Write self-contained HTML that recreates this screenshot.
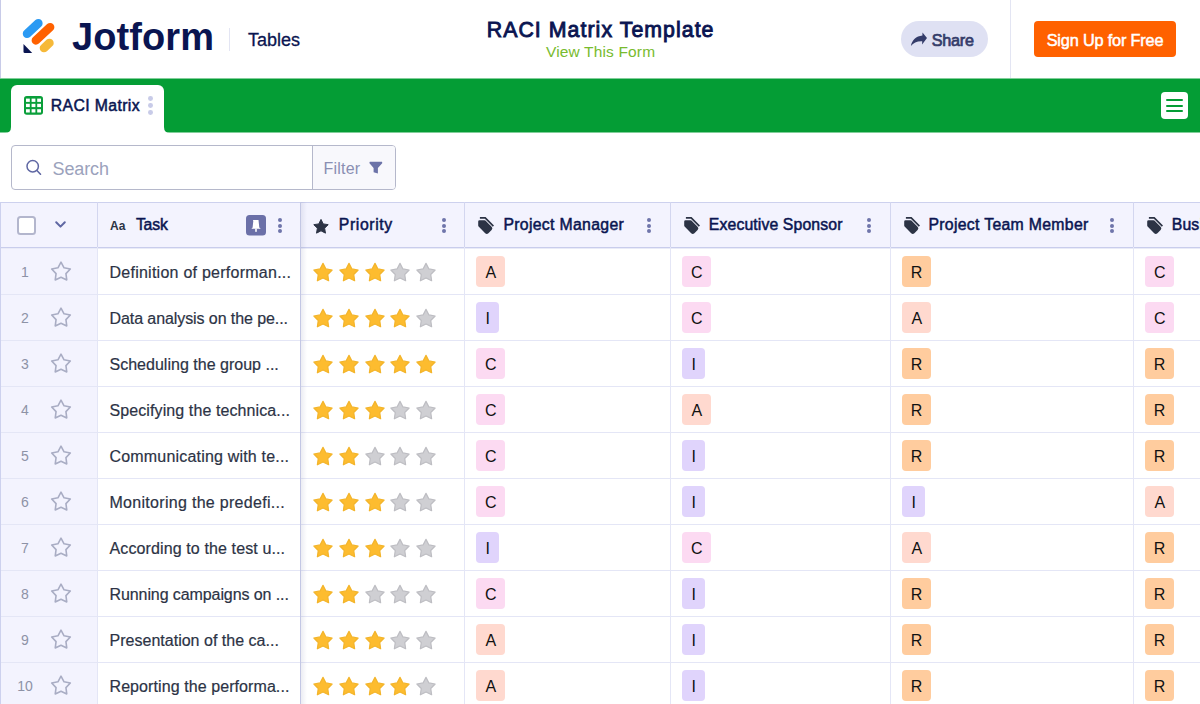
<!DOCTYPE html>
<html><head><meta charset="utf-8">
<style>
*{box-sizing:border-box;margin:0;padding:0}
html,body{width:1200px;height:704px;overflow:hidden;background:#fff;font-family:"Liberation Sans",sans-serif}
.abs{position:absolute}
.t{position:absolute;white-space:nowrap;line-height:1}
.hdrtxt{font-weight:bold;font-size:15.6px;color:#0a1551}
.cell{font-size:16px;color:#2c3345;letter-spacing:0.3px;-webkit-text-stroke:0.2px #2c3345}
.badge{position:absolute;height:31.2px;border-radius:4px;font-size:16px;color:#111;text-align:center;line-height:34px}
</style></head><body>

<div class="abs" style="left:0;top:0;width:1px;height:78px;background:#c8cbe8"></div>
<svg class="abs" style="left:0;top:0" width="70" height="70" viewBox="0 0 70 70"><g transform="translate(32.7,28.5) rotate(-43)"><rect x="-12" y="-4.3" width="24" height="8.6" rx="4.3" fill="#2b9af3"/></g><g transform="translate(43,33.8) rotate(-43)"><rect x="-14" y="-4.3" width="28" height="8.6" rx="4.3" fill="#ff6100"/></g><g transform="translate(46.7,45.5) rotate(-43)"><rect x="-8" y="-4.3" width="16" height="8.6" rx="4.3" fill="#f6b939"/></g><path d="M23.5 44 L32.2 53 L24.8 53 Q23.5 53 23.5 51.7 Z" fill="#0a1551"/></svg>
<div class="t" style="left:72px;top:18px;font-size:38px;font-weight:bold;color:#0a1551;letter-spacing:0.1px">Jotform</div>
<div class="abs" style="left:229px;top:28px;width:1px;height:23px;background:#e3e5f3"></div>
<div class="t" style="left:248px;top:31.4px;font-size:18px;color:#0a1551;letter-spacing:0px;-webkit-text-stroke:0.3px #0a1551">Tables</div>
<div class="t" id="title" style="left:486.74px;top:20px;font-size:21.3px;color:#0a1551;letter-spacing:1.053px;-webkit-text-stroke:0.9px #0a1551;">RACI Matrix Template</div>
<div class="t" style="left:546px;top:44.3px;font-size:15.5px;letter-spacing:0.15px;color:#78bb2e">View This Form</div>
<div class="abs" style="left:901px;top:21px;width:87px;height:35.8px;border-radius:18px;background:#dfe1f3"></div>
<svg class="abs" style="left:910px;top:32px" width="18" height="15" viewBox="0 0 18 15"><path d="M12.5 0.4 L17 6 L12.1 12.4 L12.2 9.2 C7 9 3.5 10.5 0.9 13.9 C2 8.5 6 4.2 12.4 3.6 Z" fill="#343c6a"/></svg>
<div class="t" id="share" style="left:931.66px;top:31.5px;font-size:16.2px;color:#343c6a;letter-spacing:-0.200px;-webkit-text-stroke:0.7px #343c6a;">Share</div>
<div class="abs" style="left:1010px;top:0;width:1px;height:78px;background:#e3e5f3"></div>
<div class="abs" style="left:1034px;top:21px;width:142px;height:36px;border-radius:4px;background:#ff6100"></div>
<div class="t" id="signup" style="left:1046.66px;top:32.3px;font-size:16.3px;color:#fff;letter-spacing:-0.171px;-webkit-text-stroke:0.5px #fff;">Sign Up for Free</div>
<div class="abs" style="left:0;top:79px;width:1200px;height:53px;background:#049d35"></div>
<div class="abs" style="left:0;top:78px;width:1200px;height:1px;background:#049d35;opacity:0.5"></div>
<div class="abs" style="left:0;top:132px;width:1200px;height:1px;background:#049d35;opacity:0.5"></div>
<div class="abs" style="left:11px;top:85px;width:153px;height:48px;background:#fff;border-radius:6px 6px 0 0"></div>
<svg class="abs" style="left:5px;top:126.5px" width="6" height="6" viewBox="0 0 6 6"><path d="M6 0 L6 6 L0 6 Q6 6 6 0Z" fill="#fff"/></svg>
<svg class="abs" style="left:164px;top:126.5px" width="6" height="6" viewBox="0 0 6 6"><path d="M0 0 L0 6 L6 6 Q0 6 0 0Z" fill="#fff"/></svg>
<svg class="abs" style="left:24.2px;top:96px" width="19" height="19" viewBox="0 0 19 19"><rect x="0" y="0" width="19" height="18.8" rx="2.8" fill="#0a9f3a"/><rect x="2" y="2.6" width="3.8" height="3.3" fill="#fff"/><rect x="2" y="7.8" width="3.8" height="3.3" fill="#fff"/><rect x="2" y="13.2" width="3.8" height="3.3" fill="#fff"/><rect x="7.6" y="2.6" width="3.8" height="3.3" fill="#fff"/><rect x="7.6" y="7.8" width="3.8" height="3.3" fill="#fff"/><rect x="7.6" y="13.2" width="3.8" height="3.3" fill="#fff"/><rect x="13.2" y="2.6" width="3.8" height="3.3" fill="#fff"/><rect x="13.2" y="7.8" width="3.8" height="3.3" fill="#fff"/><rect x="13.2" y="13.2" width="3.8" height="3.3" fill="#fff"/></svg>
<div class="t" id="tab" style="left:50.78px;top:97.8px;font-size:15.8px;color:#0a1551;letter-spacing:0.368px;-webkit-text-stroke:0.5px #0a1551;">RACI Matrix</div>
<div class="abs" style="left:148.1px;top:96.1px;width:4.8px;height:4.8px;border-radius:50%;background:#c8cbe8"></div><div class="abs" style="left:148.1px;top:103.1px;width:4.8px;height:4.8px;border-radius:50%;background:#c8cbe8"></div><div class="abs" style="left:148.1px;top:110.1px;width:4.8px;height:4.8px;border-radius:50%;background:#c8cbe8"></div>
<div class="abs" style="left:1161px;top:92px;width:27px;height:27px;border-radius:4px;background:#fff"></div>
<div class="abs" style="left:1166.3px;top:98.9px;width:17px;height:2.1px;border-radius:1px;background:#049d35"></div>
<div class="abs" style="left:1166.3px;top:104.5px;width:17px;height:2.1px;border-radius:1px;background:#049d35"></div>
<div class="abs" style="left:1166.3px;top:110.1px;width:17px;height:2.1px;border-radius:1px;background:#049d35"></div>
<div class="abs" style="left:11px;top:145px;width:384.5px;height:45px;border:1px solid #b5b8cb;border-radius:4px;background:#fff;overflow:hidden"><div class="abs" style="left:299.5px;top:0;width:85px;height:45px;background:#f8f8fc;border-left:1px solid #b5b8cb"></div></div>
<svg class="abs" style="left:25px;top:159px" width="17" height="17" viewBox="0 0 17 17"><circle cx="7.7" cy="7.2" r="5.7" fill="none" stroke="#5f67a3" stroke-width="1.5"/><path d="M11.9 11.5 L15.5 15.2" stroke="#5f67a3" stroke-width="1.6" stroke-linecap="round"/></svg>
<div class="t" style="left:52.5px;top:160px;font-size:18px;letter-spacing:-0.1px;color:#9ba2bc">Search</div>
<div class="t" style="left:323.5px;top:160.5px;font-size:16px;letter-spacing:0.2px;color:#8a8fb3">Filter</div>
<svg class="abs" style="left:369px;top:161px" width="14" height="13" viewBox="0 0 14 13"><path d="M0.9 0.8 L12.9 0.8 Q13.2 0.8 13.2 1.2 L13.2 2.2 L8.9 7 L8.9 12.4 L4.6 11.2 L4.6 7 L0.5 2.2 L0.5 1.2 Q0.5 0.8 0.9 0.8 Z" fill="#6c73a8"/></svg>
<div class="abs" style="left:0;top:202px;width:1200px;height:45px;background:#f3f3fe"></div>
<div class="abs" style="left:0;top:247px;width:97px;height:457px;background:#f3f3fe"></div>
<div class="abs" style="left:0;top:202px;width:1200px;height:1px;background:#cdd1ee"></div>
<div class="abs" style="left:0;top:247px;width:1200px;height:1px;background:#c9cdec"></div>
<div class="abs" style="left:0;top:248px;width:1200px;height:1px;background:#e9ebf8"></div>
<div class="abs" style="left:0;top:294px;width:1200px;height:1px;background:#e4e6f6"></div>
<div class="abs" style="left:0;top:340px;width:1200px;height:1px;background:#e4e6f6"></div>
<div class="abs" style="left:0;top:386px;width:1200px;height:1px;background:#e4e6f6"></div>
<div class="abs" style="left:0;top:432px;width:1200px;height:1px;background:#e4e6f6"></div>
<div class="abs" style="left:0;top:478px;width:1200px;height:1px;background:#e4e6f6"></div>
<div class="abs" style="left:0;top:524px;width:1200px;height:1px;background:#e4e6f6"></div>
<div class="abs" style="left:0;top:570px;width:1200px;height:1px;background:#e4e6f6"></div>
<div class="abs" style="left:0;top:616px;width:1200px;height:1px;background:#e4e6f6"></div>
<div class="abs" style="left:0;top:662px;width:1200px;height:1px;background:#e4e6f6"></div>
<div class="abs" style="left:0;top:202px;width:1px;height:502px;background:#cdd1ee"></div>
<div class="abs" style="left:97px;top:202px;width:1px;height:45px;background:#d3d6ef"></div>
<div class="abs" style="left:97px;top:247px;width:1px;height:457px;background:#e4e6f6"></div>
<div class="abs" style="left:301px;top:202px;width:6px;height:502px;background:linear-gradient(90deg,rgba(120,125,170,0.14),rgba(120,125,170,0))"></div>
<div class="abs" style="left:300px;top:202px;width:1px;height:502px;background:#c3c7e4"></div>
<div class="abs" style="left:464px;top:202px;width:1px;height:45px;background:#d3d6ef"></div>
<div class="abs" style="left:464px;top:247px;width:1px;height:457px;background:#e4e6f6"></div>
<div class="abs" style="left:670px;top:202px;width:1px;height:45px;background:#d3d6ef"></div>
<div class="abs" style="left:670px;top:247px;width:1px;height:457px;background:#e4e6f6"></div>
<div class="abs" style="left:890px;top:202px;width:1px;height:45px;background:#d3d6ef"></div>
<div class="abs" style="left:890px;top:247px;width:1px;height:457px;background:#e4e6f6"></div>
<div class="abs" style="left:1133px;top:202px;width:1px;height:45px;background:#d3d6ef"></div>
<div class="abs" style="left:1133px;top:247px;width:1px;height:457px;background:#e4e6f6"></div>
<div class="abs" style="left:17px;top:215.5px;width:18.8px;height:19px;border:2px solid #b3b6cd;border-radius:3.5px;background:#fff"></div>
<svg class="abs" style="left:54px;top:220px" width="13" height="9" viewBox="0 0 13 9"><path d="M2.2 2.2 L6.5 6.6 L10.8 2.2" fill="none" stroke="#5f67a3" stroke-width="2" stroke-linecap="round" stroke-linejoin="round"/></svg>
<div class="t" style="left:110px;top:220px;font-size:12px;font-weight:bold;color:#2c3345">Aa</div>
<div class="t" id="h_task" style="left:135.88px;top:216.5px;font-size:15.8px;color:#0a1551;letter-spacing:-0.160px;-webkit-text-stroke:0.5px #0a1551;">Task</div>
<svg class="abs" style="left:246.2px;top:215.3px" width="20" height="20.5" viewBox="0 0 20 20.5"><rect width="20" height="20.5" rx="3.5" fill="#6b70a8"/><path d="M6.9 5 L12.5 5 L12.6 6 L13.3 12.4 L14.8 13.7 L5.4 13.7 L6.6 12.4 L7.3 6 Z" fill="#fff"/><rect x="9.2" y="13.6" width="1.6" height="3.2" fill="#fff"/></svg>
<div class="abs" style="left:277.75px;top:218.05px;width:3.9px;height:3.9px;border-radius:50%;background:#6f75ab"></div><div class="abs" style="left:277.75px;top:223.65px;width:3.9px;height:3.9px;border-radius:50%;background:#6f75ab"></div><div class="abs" style="left:277.75px;top:229.25px;width:3.9px;height:3.9px;border-radius:50%;background:#6f75ab"></div>
<svg class="abs" style="left:309.2px;top:214.6px" width="24" height="24" viewBox="0 0 24 24"><path d="M12.00 4.40 L14.23 8.93 L19.23 9.65 L15.61 13.17 L16.47 18.15 L12.00 15.80 L7.53 18.15 L8.39 13.17 L4.77 9.65 L9.77 8.93Z" fill="#2c3345" stroke="#2c3345" stroke-width="1.0" stroke-linejoin="round"/></svg>
<div class="t" id="h_pri" style="left:338.80px;top:216.5px;font-size:15.8px;color:#0a1551;letter-spacing:0.617px;-webkit-text-stroke:0.5px #0a1551;">Priority</div>
<div class="abs" style="left:441.85px;top:218.05px;width:3.9px;height:3.9px;border-radius:50%;background:#6f75ab"></div><div class="abs" style="left:441.85px;top:223.65px;width:3.9px;height:3.9px;border-radius:50%;background:#6f75ab"></div><div class="abs" style="left:441.85px;top:229.25px;width:3.9px;height:3.9px;border-radius:50%;background:#6f75ab"></div>
<svg class="abs" style="left:472px;top:210px" width="30" height="30" viewBox="0 0 30 30"><path d="M6.2 11.6 Q6.2 10.2 7.6 10.2 L12.4 10.2 Q13 10.2 13.4 10.6 L19.6 16.8 Q21.2 18.4 19.6 20 L16.4 23.2 Q14.8 24.8 13.2 23.2 L6.6 16.6 Q6.2 16.2 6.2 15.6 Z" fill="#2c3345"/><path d="M7.9 7.9 L13.2 7.9 L21.4 16.1" fill="none" stroke="#2c3345" stroke-width="1.7"/></svg>
<div class="t" id="h_pm" style="left:503.40px;top:216.5px;font-size:15.8px;color:#0a1551;letter-spacing:0.320px;-webkit-text-stroke:0.5px #0a1551;">Project Manager</div>
<div class="abs" style="left:647.4499999999999px;top:218.05px;width:3.9px;height:3.9px;border-radius:50%;background:#6f75ab"></div><div class="abs" style="left:647.4499999999999px;top:223.65px;width:3.9px;height:3.9px;border-radius:50%;background:#6f75ab"></div><div class="abs" style="left:647.4499999999999px;top:229.25px;width:3.9px;height:3.9px;border-radius:50%;background:#6f75ab"></div>
<svg class="abs" style="left:678px;top:210px" width="30" height="30" viewBox="0 0 30 30"><path d="M6.2 11.6 Q6.2 10.2 7.6 10.2 L12.4 10.2 Q13 10.2 13.4 10.6 L19.6 16.8 Q21.2 18.4 19.6 20 L16.4 23.2 Q14.8 24.8 13.2 23.2 L6.6 16.6 Q6.2 16.2 6.2 15.6 Z" fill="#2c3345"/><path d="M7.9 7.9 L13.2 7.9 L21.4 16.1" fill="none" stroke="#2c3345" stroke-width="1.7"/></svg>
<div class="t" id="h_es" style="left:708.80px;top:216.5px;font-size:15.8px;color:#0a1551;letter-spacing:0.120px;-webkit-text-stroke:0.5px #0a1551;">Executive Sponsor</div>
<div class="abs" style="left:867.4499999999999px;top:218.05px;width:3.9px;height:3.9px;border-radius:50%;background:#6f75ab"></div><div class="abs" style="left:867.4499999999999px;top:223.65px;width:3.9px;height:3.9px;border-radius:50%;background:#6f75ab"></div><div class="abs" style="left:867.4499999999999px;top:229.25px;width:3.9px;height:3.9px;border-radius:50%;background:#6f75ab"></div>
<svg class="abs" style="left:898px;top:210px" width="30" height="30" viewBox="0 0 30 30"><path d="M6.2 11.6 Q6.2 10.2 7.6 10.2 L12.4 10.2 Q13 10.2 13.4 10.6 L19.6 16.8 Q21.2 18.4 19.6 20 L16.4 23.2 Q14.8 24.8 13.2 23.2 L6.6 16.6 Q6.2 16.2 6.2 15.6 Z" fill="#2c3345"/><path d="M7.9 7.9 L13.2 7.9 L21.4 16.1" fill="none" stroke="#2c3345" stroke-width="1.7"/></svg>
<div class="t" id="h_ptm" style="left:928.44px;top:216.5px;font-size:15.8px;color:#0a1551;letter-spacing:0.311px;-webkit-text-stroke:0.5px #0a1551;">Project Team Member</div>
<div class="abs" style="left:1110.05px;top:218.05px;width:3.9px;height:3.9px;border-radius:50%;background:#6f75ab"></div><div class="abs" style="left:1110.05px;top:223.65px;width:3.9px;height:3.9px;border-radius:50%;background:#6f75ab"></div><div class="abs" style="left:1110.05px;top:229.25px;width:3.9px;height:3.9px;border-radius:50%;background:#6f75ab"></div>
<svg class="abs" style="left:1141px;top:210px" width="30" height="30" viewBox="0 0 30 30"><path d="M6.2 11.6 Q6.2 10.2 7.6 10.2 L12.4 10.2 Q13 10.2 13.4 10.6 L19.6 16.8 Q21.2 18.4 19.6 20 L16.4 23.2 Q14.8 24.8 13.2 23.2 L6.6 16.6 Q6.2 16.2 6.2 15.6 Z" fill="#2c3345"/><path d="M7.9 7.9 L13.2 7.9 L21.4 16.1" fill="none" stroke="#2c3345" stroke-width="1.7"/></svg>
<div class="t" id="h_ba" style="left:1171.80px;top:216.5px;font-size:15.8px;color:#0a1551;letter-spacing:0.120px;-webkit-text-stroke:0.5px #0a1551;">Business Analyst</div>
<div class="t" style="left:0;top:265px;width:50px;text-align:center;font-size:14px;color:#8d92a6">1</div>
<svg class="abs" style="left:48.6px;top:260.0px" width="24" height="24" viewBox="0 0 24 24"><path d="M12.00 2.20 L15.05 7.80 L21.32 8.97 L16.94 13.61 L17.76 19.93 L12.00 17.19 L6.24 19.93 L7.06 13.61 L2.68 8.97 L8.95 7.80Z" fill="none" stroke="#a9adc4" stroke-width="1.6" stroke-linejoin="round"/></svg>
<div class="t cell" style="left:109.5px;top:264.7px;letter-spacing:0.252px">Definition of performan...</div>
<svg class="abs" style="left:311.0px;top:260.8px" width="24" height="24" viewBox="0 0 24 24"><path d="M12.00 2.40 L14.93 7.96 L21.13 9.03 L16.75 13.54 L17.64 19.77 L12.00 16.99 L6.36 19.77 L7.25 13.54 L2.87 9.03 L9.07 7.96Z" fill="#fdbc2f" stroke="#f3b42a" stroke-width="1.2" stroke-linejoin="round"/></svg>
<svg class="abs" style="left:336.8px;top:260.8px" width="24" height="24" viewBox="0 0 24 24"><path d="M12.00 2.40 L14.93 7.96 L21.13 9.03 L16.75 13.54 L17.64 19.77 L12.00 16.99 L6.36 19.77 L7.25 13.54 L2.87 9.03 L9.07 7.96Z" fill="#fdbc2f" stroke="#f3b42a" stroke-width="1.2" stroke-linejoin="round"/></svg>
<svg class="abs" style="left:362.6px;top:260.8px" width="24" height="24" viewBox="0 0 24 24"><path d="M12.00 2.40 L14.93 7.96 L21.13 9.03 L16.75 13.54 L17.64 19.77 L12.00 16.99 L6.36 19.77 L7.25 13.54 L2.87 9.03 L9.07 7.96Z" fill="#fdbc2f" stroke="#f3b42a" stroke-width="1.2" stroke-linejoin="round"/></svg>
<svg class="abs" style="left:388.4px;top:260.8px" width="24" height="24" viewBox="0 0 24 24"><path d="M12.00 2.40 L14.93 7.96 L21.13 9.03 L16.75 13.54 L17.64 19.77 L12.00 16.99 L6.36 19.77 L7.25 13.54 L2.87 9.03 L9.07 7.96Z" fill="#cfcfd3" stroke="#bdbdc2" stroke-width="1.2" stroke-linejoin="round"/></svg>
<svg class="abs" style="left:414.2px;top:260.8px" width="24" height="24" viewBox="0 0 24 24"><path d="M12.00 2.40 L14.93 7.96 L21.13 9.03 L16.75 13.54 L17.64 19.77 L12.00 16.99 L6.36 19.77 L7.25 13.54 L2.87 9.03 L9.07 7.96Z" fill="#cfcfd3" stroke="#bdbdc2" stroke-width="1.2" stroke-linejoin="round"/></svg>
<div class="badge" style="left:476.4px;top:256px;width:29px;background:#ffd9cf">A</div>
<div class="badge" style="left:682.4px;top:256px;width:29px;background:#fcdaf2">C</div>
<div class="badge" style="left:902.4px;top:256px;width:28.2px;background:#ffcc9e">R</div>
<div class="badge" style="left:1145.4px;top:256px;width:29px;background:#fcdaf2">C</div>
<div class="t" style="left:0;top:311px;width:50px;text-align:center;font-size:14px;color:#8d92a6">2</div>
<svg class="abs" style="left:48.6px;top:306.0px" width="24" height="24" viewBox="0 0 24 24"><path d="M12.00 2.20 L15.05 7.80 L21.32 8.97 L16.94 13.61 L17.76 19.93 L12.00 17.19 L6.24 19.93 L7.06 13.61 L2.68 8.97 L8.95 7.80Z" fill="none" stroke="#a9adc4" stroke-width="1.6" stroke-linejoin="round"/></svg>
<div class="t cell" style="left:109.5px;top:310.7px;letter-spacing:-0.084px">Data analysis on the pe...</div>
<svg class="abs" style="left:311.0px;top:306.8px" width="24" height="24" viewBox="0 0 24 24"><path d="M12.00 2.40 L14.93 7.96 L21.13 9.03 L16.75 13.54 L17.64 19.77 L12.00 16.99 L6.36 19.77 L7.25 13.54 L2.87 9.03 L9.07 7.96Z" fill="#fdbc2f" stroke="#f3b42a" stroke-width="1.2" stroke-linejoin="round"/></svg>
<svg class="abs" style="left:336.8px;top:306.8px" width="24" height="24" viewBox="0 0 24 24"><path d="M12.00 2.40 L14.93 7.96 L21.13 9.03 L16.75 13.54 L17.64 19.77 L12.00 16.99 L6.36 19.77 L7.25 13.54 L2.87 9.03 L9.07 7.96Z" fill="#fdbc2f" stroke="#f3b42a" stroke-width="1.2" stroke-linejoin="round"/></svg>
<svg class="abs" style="left:362.6px;top:306.8px" width="24" height="24" viewBox="0 0 24 24"><path d="M12.00 2.40 L14.93 7.96 L21.13 9.03 L16.75 13.54 L17.64 19.77 L12.00 16.99 L6.36 19.77 L7.25 13.54 L2.87 9.03 L9.07 7.96Z" fill="#fdbc2f" stroke="#f3b42a" stroke-width="1.2" stroke-linejoin="round"/></svg>
<svg class="abs" style="left:388.4px;top:306.8px" width="24" height="24" viewBox="0 0 24 24"><path d="M12.00 2.40 L14.93 7.96 L21.13 9.03 L16.75 13.54 L17.64 19.77 L12.00 16.99 L6.36 19.77 L7.25 13.54 L2.87 9.03 L9.07 7.96Z" fill="#fdbc2f" stroke="#f3b42a" stroke-width="1.2" stroke-linejoin="round"/></svg>
<svg class="abs" style="left:414.2px;top:306.8px" width="24" height="24" viewBox="0 0 24 24"><path d="M12.00 2.40 L14.93 7.96 L21.13 9.03 L16.75 13.54 L17.64 19.77 L12.00 16.99 L6.36 19.77 L7.25 13.54 L2.87 9.03 L9.07 7.96Z" fill="#cfcfd3" stroke="#bdbdc2" stroke-width="1.2" stroke-linejoin="round"/></svg>
<div class="badge" style="left:476.4px;top:302px;width:22.6px;background:#e0d4fc">I</div>
<div class="badge" style="left:682.4px;top:302px;width:29px;background:#fcdaf2">C</div>
<div class="badge" style="left:902.4px;top:302px;width:29px;background:#ffd9cf">A</div>
<div class="badge" style="left:1145.4px;top:302px;width:29px;background:#fcdaf2">C</div>
<div class="t" style="left:0;top:357px;width:50px;text-align:center;font-size:14px;color:#8d92a6">3</div>
<svg class="abs" style="left:48.6px;top:352.0px" width="24" height="24" viewBox="0 0 24 24"><path d="M12.00 2.20 L15.05 7.80 L21.32 8.97 L16.94 13.61 L17.76 19.93 L12.00 17.19 L6.24 19.93 L7.06 13.61 L2.68 8.97 L8.95 7.80Z" fill="none" stroke="#a9adc4" stroke-width="1.6" stroke-linejoin="round"/></svg>
<div class="t cell" style="left:109.5px;top:356.7px;letter-spacing:0.013px">Scheduling the group ...</div>
<svg class="abs" style="left:311.0px;top:352.8px" width="24" height="24" viewBox="0 0 24 24"><path d="M12.00 2.40 L14.93 7.96 L21.13 9.03 L16.75 13.54 L17.64 19.77 L12.00 16.99 L6.36 19.77 L7.25 13.54 L2.87 9.03 L9.07 7.96Z" fill="#fdbc2f" stroke="#f3b42a" stroke-width="1.2" stroke-linejoin="round"/></svg>
<svg class="abs" style="left:336.8px;top:352.8px" width="24" height="24" viewBox="0 0 24 24"><path d="M12.00 2.40 L14.93 7.96 L21.13 9.03 L16.75 13.54 L17.64 19.77 L12.00 16.99 L6.36 19.77 L7.25 13.54 L2.87 9.03 L9.07 7.96Z" fill="#fdbc2f" stroke="#f3b42a" stroke-width="1.2" stroke-linejoin="round"/></svg>
<svg class="abs" style="left:362.6px;top:352.8px" width="24" height="24" viewBox="0 0 24 24"><path d="M12.00 2.40 L14.93 7.96 L21.13 9.03 L16.75 13.54 L17.64 19.77 L12.00 16.99 L6.36 19.77 L7.25 13.54 L2.87 9.03 L9.07 7.96Z" fill="#fdbc2f" stroke="#f3b42a" stroke-width="1.2" stroke-linejoin="round"/></svg>
<svg class="abs" style="left:388.4px;top:352.8px" width="24" height="24" viewBox="0 0 24 24"><path d="M12.00 2.40 L14.93 7.96 L21.13 9.03 L16.75 13.54 L17.64 19.77 L12.00 16.99 L6.36 19.77 L7.25 13.54 L2.87 9.03 L9.07 7.96Z" fill="#fdbc2f" stroke="#f3b42a" stroke-width="1.2" stroke-linejoin="round"/></svg>
<svg class="abs" style="left:414.2px;top:352.8px" width="24" height="24" viewBox="0 0 24 24"><path d="M12.00 2.40 L14.93 7.96 L21.13 9.03 L16.75 13.54 L17.64 19.77 L12.00 16.99 L6.36 19.77 L7.25 13.54 L2.87 9.03 L9.07 7.96Z" fill="#fdbc2f" stroke="#f3b42a" stroke-width="1.2" stroke-linejoin="round"/></svg>
<div class="badge" style="left:476.4px;top:348px;width:29px;background:#fcdaf2">C</div>
<div class="badge" style="left:682.4px;top:348px;width:22.6px;background:#e0d4fc">I</div>
<div class="badge" style="left:902.4px;top:348px;width:28.2px;background:#ffcc9e">R</div>
<div class="badge" style="left:1145.4px;top:348px;width:28.2px;background:#ffcc9e">R</div>
<div class="t" style="left:0;top:403px;width:50px;text-align:center;font-size:14px;color:#8d92a6">4</div>
<svg class="abs" style="left:48.6px;top:398.0px" width="24" height="24" viewBox="0 0 24 24"><path d="M12.00 2.20 L15.05 7.80 L21.32 8.97 L16.94 13.61 L17.76 19.93 L12.00 17.19 L6.24 19.93 L7.06 13.61 L2.68 8.97 L8.95 7.80Z" fill="none" stroke="#a9adc4" stroke-width="1.6" stroke-linejoin="round"/></svg>
<div class="t cell" style="left:109.5px;top:402.7px;letter-spacing:0.100px">Specifying the technica...</div>
<svg class="abs" style="left:311.0px;top:398.8px" width="24" height="24" viewBox="0 0 24 24"><path d="M12.00 2.40 L14.93 7.96 L21.13 9.03 L16.75 13.54 L17.64 19.77 L12.00 16.99 L6.36 19.77 L7.25 13.54 L2.87 9.03 L9.07 7.96Z" fill="#fdbc2f" stroke="#f3b42a" stroke-width="1.2" stroke-linejoin="round"/></svg>
<svg class="abs" style="left:336.8px;top:398.8px" width="24" height="24" viewBox="0 0 24 24"><path d="M12.00 2.40 L14.93 7.96 L21.13 9.03 L16.75 13.54 L17.64 19.77 L12.00 16.99 L6.36 19.77 L7.25 13.54 L2.87 9.03 L9.07 7.96Z" fill="#fdbc2f" stroke="#f3b42a" stroke-width="1.2" stroke-linejoin="round"/></svg>
<svg class="abs" style="left:362.6px;top:398.8px" width="24" height="24" viewBox="0 0 24 24"><path d="M12.00 2.40 L14.93 7.96 L21.13 9.03 L16.75 13.54 L17.64 19.77 L12.00 16.99 L6.36 19.77 L7.25 13.54 L2.87 9.03 L9.07 7.96Z" fill="#fdbc2f" stroke="#f3b42a" stroke-width="1.2" stroke-linejoin="round"/></svg>
<svg class="abs" style="left:388.4px;top:398.8px" width="24" height="24" viewBox="0 0 24 24"><path d="M12.00 2.40 L14.93 7.96 L21.13 9.03 L16.75 13.54 L17.64 19.77 L12.00 16.99 L6.36 19.77 L7.25 13.54 L2.87 9.03 L9.07 7.96Z" fill="#cfcfd3" stroke="#bdbdc2" stroke-width="1.2" stroke-linejoin="round"/></svg>
<svg class="abs" style="left:414.2px;top:398.8px" width="24" height="24" viewBox="0 0 24 24"><path d="M12.00 2.40 L14.93 7.96 L21.13 9.03 L16.75 13.54 L17.64 19.77 L12.00 16.99 L6.36 19.77 L7.25 13.54 L2.87 9.03 L9.07 7.96Z" fill="#cfcfd3" stroke="#bdbdc2" stroke-width="1.2" stroke-linejoin="round"/></svg>
<div class="badge" style="left:476.4px;top:394px;width:29px;background:#fcdaf2">C</div>
<div class="badge" style="left:682.4px;top:394px;width:29px;background:#ffd9cf">A</div>
<div class="badge" style="left:902.4px;top:394px;width:28.2px;background:#ffcc9e">R</div>
<div class="badge" style="left:1145.4px;top:394px;width:28.2px;background:#ffcc9e">R</div>
<div class="t" style="left:0;top:449px;width:50px;text-align:center;font-size:14px;color:#8d92a6">5</div>
<svg class="abs" style="left:48.6px;top:444.0px" width="24" height="24" viewBox="0 0 24 24"><path d="M12.00 2.20 L15.05 7.80 L21.32 8.97 L16.94 13.61 L17.76 19.93 L12.00 17.19 L6.24 19.93 L7.06 13.61 L2.68 8.97 L8.95 7.80Z" fill="none" stroke="#a9adc4" stroke-width="1.6" stroke-linejoin="round"/></svg>
<div class="t cell" style="left:109.5px;top:448.7px;letter-spacing:0.187px">Communicating with te...</div>
<svg class="abs" style="left:311.0px;top:444.8px" width="24" height="24" viewBox="0 0 24 24"><path d="M12.00 2.40 L14.93 7.96 L21.13 9.03 L16.75 13.54 L17.64 19.77 L12.00 16.99 L6.36 19.77 L7.25 13.54 L2.87 9.03 L9.07 7.96Z" fill="#fdbc2f" stroke="#f3b42a" stroke-width="1.2" stroke-linejoin="round"/></svg>
<svg class="abs" style="left:336.8px;top:444.8px" width="24" height="24" viewBox="0 0 24 24"><path d="M12.00 2.40 L14.93 7.96 L21.13 9.03 L16.75 13.54 L17.64 19.77 L12.00 16.99 L6.36 19.77 L7.25 13.54 L2.87 9.03 L9.07 7.96Z" fill="#fdbc2f" stroke="#f3b42a" stroke-width="1.2" stroke-linejoin="round"/></svg>
<svg class="abs" style="left:362.6px;top:444.8px" width="24" height="24" viewBox="0 0 24 24"><path d="M12.00 2.40 L14.93 7.96 L21.13 9.03 L16.75 13.54 L17.64 19.77 L12.00 16.99 L6.36 19.77 L7.25 13.54 L2.87 9.03 L9.07 7.96Z" fill="#cfcfd3" stroke="#bdbdc2" stroke-width="1.2" stroke-linejoin="round"/></svg>
<svg class="abs" style="left:388.4px;top:444.8px" width="24" height="24" viewBox="0 0 24 24"><path d="M12.00 2.40 L14.93 7.96 L21.13 9.03 L16.75 13.54 L17.64 19.77 L12.00 16.99 L6.36 19.77 L7.25 13.54 L2.87 9.03 L9.07 7.96Z" fill="#cfcfd3" stroke="#bdbdc2" stroke-width="1.2" stroke-linejoin="round"/></svg>
<svg class="abs" style="left:414.2px;top:444.8px" width="24" height="24" viewBox="0 0 24 24"><path d="M12.00 2.40 L14.93 7.96 L21.13 9.03 L16.75 13.54 L17.64 19.77 L12.00 16.99 L6.36 19.77 L7.25 13.54 L2.87 9.03 L9.07 7.96Z" fill="#cfcfd3" stroke="#bdbdc2" stroke-width="1.2" stroke-linejoin="round"/></svg>
<div class="badge" style="left:476.4px;top:440px;width:29px;background:#fcdaf2">C</div>
<div class="badge" style="left:682.4px;top:440px;width:22.6px;background:#e0d4fc">I</div>
<div class="badge" style="left:902.4px;top:440px;width:28.2px;background:#ffcc9e">R</div>
<div class="badge" style="left:1145.4px;top:440px;width:28.2px;background:#ffcc9e">R</div>
<div class="t" style="left:0;top:495px;width:50px;text-align:center;font-size:14px;color:#8d92a6">6</div>
<svg class="abs" style="left:48.6px;top:490.0px" width="24" height="24" viewBox="0 0 24 24"><path d="M12.00 2.20 L15.05 7.80 L21.32 8.97 L16.94 13.61 L17.76 19.93 L12.00 17.19 L6.24 19.93 L7.06 13.61 L2.68 8.97 L8.95 7.80Z" fill="none" stroke="#a9adc4" stroke-width="1.6" stroke-linejoin="round"/></svg>
<div class="t cell" style="left:109.5px;top:494.7px;letter-spacing:0.296px">Monitoring the predefi...</div>
<svg class="abs" style="left:311.0px;top:490.8px" width="24" height="24" viewBox="0 0 24 24"><path d="M12.00 2.40 L14.93 7.96 L21.13 9.03 L16.75 13.54 L17.64 19.77 L12.00 16.99 L6.36 19.77 L7.25 13.54 L2.87 9.03 L9.07 7.96Z" fill="#fdbc2f" stroke="#f3b42a" stroke-width="1.2" stroke-linejoin="round"/></svg>
<svg class="abs" style="left:336.8px;top:490.8px" width="24" height="24" viewBox="0 0 24 24"><path d="M12.00 2.40 L14.93 7.96 L21.13 9.03 L16.75 13.54 L17.64 19.77 L12.00 16.99 L6.36 19.77 L7.25 13.54 L2.87 9.03 L9.07 7.96Z" fill="#fdbc2f" stroke="#f3b42a" stroke-width="1.2" stroke-linejoin="round"/></svg>
<svg class="abs" style="left:362.6px;top:490.8px" width="24" height="24" viewBox="0 0 24 24"><path d="M12.00 2.40 L14.93 7.96 L21.13 9.03 L16.75 13.54 L17.64 19.77 L12.00 16.99 L6.36 19.77 L7.25 13.54 L2.87 9.03 L9.07 7.96Z" fill="#fdbc2f" stroke="#f3b42a" stroke-width="1.2" stroke-linejoin="round"/></svg>
<svg class="abs" style="left:388.4px;top:490.8px" width="24" height="24" viewBox="0 0 24 24"><path d="M12.00 2.40 L14.93 7.96 L21.13 9.03 L16.75 13.54 L17.64 19.77 L12.00 16.99 L6.36 19.77 L7.25 13.54 L2.87 9.03 L9.07 7.96Z" fill="#cfcfd3" stroke="#bdbdc2" stroke-width="1.2" stroke-linejoin="round"/></svg>
<svg class="abs" style="left:414.2px;top:490.8px" width="24" height="24" viewBox="0 0 24 24"><path d="M12.00 2.40 L14.93 7.96 L21.13 9.03 L16.75 13.54 L17.64 19.77 L12.00 16.99 L6.36 19.77 L7.25 13.54 L2.87 9.03 L9.07 7.96Z" fill="#cfcfd3" stroke="#bdbdc2" stroke-width="1.2" stroke-linejoin="round"/></svg>
<div class="badge" style="left:476.4px;top:486px;width:29px;background:#fcdaf2">C</div>
<div class="badge" style="left:682.4px;top:486px;width:22.6px;background:#e0d4fc">I</div>
<div class="badge" style="left:902.4px;top:486px;width:22.6px;background:#e0d4fc">I</div>
<div class="badge" style="left:1145.4px;top:486px;width:29px;background:#ffd9cf">A</div>
<div class="t" style="left:0;top:541px;width:50px;text-align:center;font-size:14px;color:#8d92a6">7</div>
<svg class="abs" style="left:48.6px;top:536.0px" width="24" height="24" viewBox="0 0 24 24"><path d="M12.00 2.20 L15.05 7.80 L21.32 8.97 L16.94 13.61 L17.76 19.93 L12.00 17.19 L6.24 19.93 L7.06 13.61 L2.68 8.97 L8.95 7.80Z" fill="none" stroke="#a9adc4" stroke-width="1.6" stroke-linejoin="round"/></svg>
<div class="t cell" style="left:109.5px;top:540.7px;letter-spacing:0.120px">According to the test u...</div>
<svg class="abs" style="left:311.0px;top:536.8px" width="24" height="24" viewBox="0 0 24 24"><path d="M12.00 2.40 L14.93 7.96 L21.13 9.03 L16.75 13.54 L17.64 19.77 L12.00 16.99 L6.36 19.77 L7.25 13.54 L2.87 9.03 L9.07 7.96Z" fill="#fdbc2f" stroke="#f3b42a" stroke-width="1.2" stroke-linejoin="round"/></svg>
<svg class="abs" style="left:336.8px;top:536.8px" width="24" height="24" viewBox="0 0 24 24"><path d="M12.00 2.40 L14.93 7.96 L21.13 9.03 L16.75 13.54 L17.64 19.77 L12.00 16.99 L6.36 19.77 L7.25 13.54 L2.87 9.03 L9.07 7.96Z" fill="#fdbc2f" stroke="#f3b42a" stroke-width="1.2" stroke-linejoin="round"/></svg>
<svg class="abs" style="left:362.6px;top:536.8px" width="24" height="24" viewBox="0 0 24 24"><path d="M12.00 2.40 L14.93 7.96 L21.13 9.03 L16.75 13.54 L17.64 19.77 L12.00 16.99 L6.36 19.77 L7.25 13.54 L2.87 9.03 L9.07 7.96Z" fill="#fdbc2f" stroke="#f3b42a" stroke-width="1.2" stroke-linejoin="round"/></svg>
<svg class="abs" style="left:388.4px;top:536.8px" width="24" height="24" viewBox="0 0 24 24"><path d="M12.00 2.40 L14.93 7.96 L21.13 9.03 L16.75 13.54 L17.64 19.77 L12.00 16.99 L6.36 19.77 L7.25 13.54 L2.87 9.03 L9.07 7.96Z" fill="#cfcfd3" stroke="#bdbdc2" stroke-width="1.2" stroke-linejoin="round"/></svg>
<svg class="abs" style="left:414.2px;top:536.8px" width="24" height="24" viewBox="0 0 24 24"><path d="M12.00 2.40 L14.93 7.96 L21.13 9.03 L16.75 13.54 L17.64 19.77 L12.00 16.99 L6.36 19.77 L7.25 13.54 L2.87 9.03 L9.07 7.96Z" fill="#cfcfd3" stroke="#bdbdc2" stroke-width="1.2" stroke-linejoin="round"/></svg>
<div class="badge" style="left:476.4px;top:532px;width:22.6px;background:#e0d4fc">I</div>
<div class="badge" style="left:682.4px;top:532px;width:29px;background:#fcdaf2">C</div>
<div class="badge" style="left:902.4px;top:532px;width:29px;background:#ffd9cf">A</div>
<div class="badge" style="left:1145.4px;top:532px;width:28.2px;background:#ffcc9e">R</div>
<div class="t" style="left:0;top:587px;width:50px;text-align:center;font-size:14px;color:#8d92a6">8</div>
<svg class="abs" style="left:48.6px;top:582.0px" width="24" height="24" viewBox="0 0 24 24"><path d="M12.00 2.20 L15.05 7.80 L21.32 8.97 L16.94 13.61 L17.76 19.93 L12.00 17.19 L6.24 19.93 L7.06 13.61 L2.68 8.97 L8.95 7.80Z" fill="none" stroke="#a9adc4" stroke-width="1.6" stroke-linejoin="round"/></svg>
<div class="t cell" style="left:109.5px;top:586.7px;letter-spacing:-0.091px">Running campaigns on ...</div>
<svg class="abs" style="left:311.0px;top:582.8px" width="24" height="24" viewBox="0 0 24 24"><path d="M12.00 2.40 L14.93 7.96 L21.13 9.03 L16.75 13.54 L17.64 19.77 L12.00 16.99 L6.36 19.77 L7.25 13.54 L2.87 9.03 L9.07 7.96Z" fill="#fdbc2f" stroke="#f3b42a" stroke-width="1.2" stroke-linejoin="round"/></svg>
<svg class="abs" style="left:336.8px;top:582.8px" width="24" height="24" viewBox="0 0 24 24"><path d="M12.00 2.40 L14.93 7.96 L21.13 9.03 L16.75 13.54 L17.64 19.77 L12.00 16.99 L6.36 19.77 L7.25 13.54 L2.87 9.03 L9.07 7.96Z" fill="#fdbc2f" stroke="#f3b42a" stroke-width="1.2" stroke-linejoin="round"/></svg>
<svg class="abs" style="left:362.6px;top:582.8px" width="24" height="24" viewBox="0 0 24 24"><path d="M12.00 2.40 L14.93 7.96 L21.13 9.03 L16.75 13.54 L17.64 19.77 L12.00 16.99 L6.36 19.77 L7.25 13.54 L2.87 9.03 L9.07 7.96Z" fill="#cfcfd3" stroke="#bdbdc2" stroke-width="1.2" stroke-linejoin="round"/></svg>
<svg class="abs" style="left:388.4px;top:582.8px" width="24" height="24" viewBox="0 0 24 24"><path d="M12.00 2.40 L14.93 7.96 L21.13 9.03 L16.75 13.54 L17.64 19.77 L12.00 16.99 L6.36 19.77 L7.25 13.54 L2.87 9.03 L9.07 7.96Z" fill="#cfcfd3" stroke="#bdbdc2" stroke-width="1.2" stroke-linejoin="round"/></svg>
<svg class="abs" style="left:414.2px;top:582.8px" width="24" height="24" viewBox="0 0 24 24"><path d="M12.00 2.40 L14.93 7.96 L21.13 9.03 L16.75 13.54 L17.64 19.77 L12.00 16.99 L6.36 19.77 L7.25 13.54 L2.87 9.03 L9.07 7.96Z" fill="#cfcfd3" stroke="#bdbdc2" stroke-width="1.2" stroke-linejoin="round"/></svg>
<div class="badge" style="left:476.4px;top:578px;width:29px;background:#fcdaf2">C</div>
<div class="badge" style="left:682.4px;top:578px;width:22.6px;background:#e0d4fc">I</div>
<div class="badge" style="left:902.4px;top:578px;width:28.2px;background:#ffcc9e">R</div>
<div class="badge" style="left:1145.4px;top:578px;width:28.2px;background:#ffcc9e">R</div>
<div class="t" style="left:0;top:633px;width:50px;text-align:center;font-size:14px;color:#8d92a6">9</div>
<svg class="abs" style="left:48.6px;top:628.0px" width="24" height="24" viewBox="0 0 24 24"><path d="M12.00 2.20 L15.05 7.80 L21.32 8.97 L16.94 13.61 L17.76 19.93 L12.00 17.19 L6.24 19.93 L7.06 13.61 L2.68 8.97 L8.95 7.80Z" fill="none" stroke="#a9adc4" stroke-width="1.6" stroke-linejoin="round"/></svg>
<div class="t cell" style="left:109.5px;top:632.7px;letter-spacing:0.017px">Presentation of the ca...</div>
<svg class="abs" style="left:311.0px;top:628.8px" width="24" height="24" viewBox="0 0 24 24"><path d="M12.00 2.40 L14.93 7.96 L21.13 9.03 L16.75 13.54 L17.64 19.77 L12.00 16.99 L6.36 19.77 L7.25 13.54 L2.87 9.03 L9.07 7.96Z" fill="#fdbc2f" stroke="#f3b42a" stroke-width="1.2" stroke-linejoin="round"/></svg>
<svg class="abs" style="left:336.8px;top:628.8px" width="24" height="24" viewBox="0 0 24 24"><path d="M12.00 2.40 L14.93 7.96 L21.13 9.03 L16.75 13.54 L17.64 19.77 L12.00 16.99 L6.36 19.77 L7.25 13.54 L2.87 9.03 L9.07 7.96Z" fill="#fdbc2f" stroke="#f3b42a" stroke-width="1.2" stroke-linejoin="round"/></svg>
<svg class="abs" style="left:362.6px;top:628.8px" width="24" height="24" viewBox="0 0 24 24"><path d="M12.00 2.40 L14.93 7.96 L21.13 9.03 L16.75 13.54 L17.64 19.77 L12.00 16.99 L6.36 19.77 L7.25 13.54 L2.87 9.03 L9.07 7.96Z" fill="#fdbc2f" stroke="#f3b42a" stroke-width="1.2" stroke-linejoin="round"/></svg>
<svg class="abs" style="left:388.4px;top:628.8px" width="24" height="24" viewBox="0 0 24 24"><path d="M12.00 2.40 L14.93 7.96 L21.13 9.03 L16.75 13.54 L17.64 19.77 L12.00 16.99 L6.36 19.77 L7.25 13.54 L2.87 9.03 L9.07 7.96Z" fill="#cfcfd3" stroke="#bdbdc2" stroke-width="1.2" stroke-linejoin="round"/></svg>
<svg class="abs" style="left:414.2px;top:628.8px" width="24" height="24" viewBox="0 0 24 24"><path d="M12.00 2.40 L14.93 7.96 L21.13 9.03 L16.75 13.54 L17.64 19.77 L12.00 16.99 L6.36 19.77 L7.25 13.54 L2.87 9.03 L9.07 7.96Z" fill="#cfcfd3" stroke="#bdbdc2" stroke-width="1.2" stroke-linejoin="round"/></svg>
<div class="badge" style="left:476.4px;top:624px;width:29px;background:#ffd9cf">A</div>
<div class="badge" style="left:682.4px;top:624px;width:22.6px;background:#e0d4fc">I</div>
<div class="badge" style="left:902.4px;top:624px;width:28.2px;background:#ffcc9e">R</div>
<div class="badge" style="left:1145.4px;top:624px;width:28.2px;background:#ffcc9e">R</div>
<div class="t" style="left:0;top:679px;width:50px;text-align:center;font-size:14px;color:#8d92a6">10</div>
<svg class="abs" style="left:48.6px;top:674.0px" width="24" height="24" viewBox="0 0 24 24"><path d="M12.00 2.20 L15.05 7.80 L21.32 8.97 L16.94 13.61 L17.76 19.93 L12.00 17.19 L6.24 19.93 L7.06 13.61 L2.68 8.97 L8.95 7.80Z" fill="none" stroke="#a9adc4" stroke-width="1.6" stroke-linejoin="round"/></svg>
<div class="t cell" style="left:109.5px;top:678.7px;letter-spacing:0.083px">Reporting the performa...</div>
<svg class="abs" style="left:311.0px;top:674.8px" width="24" height="24" viewBox="0 0 24 24"><path d="M12.00 2.40 L14.93 7.96 L21.13 9.03 L16.75 13.54 L17.64 19.77 L12.00 16.99 L6.36 19.77 L7.25 13.54 L2.87 9.03 L9.07 7.96Z" fill="#fdbc2f" stroke="#f3b42a" stroke-width="1.2" stroke-linejoin="round"/></svg>
<svg class="abs" style="left:336.8px;top:674.8px" width="24" height="24" viewBox="0 0 24 24"><path d="M12.00 2.40 L14.93 7.96 L21.13 9.03 L16.75 13.54 L17.64 19.77 L12.00 16.99 L6.36 19.77 L7.25 13.54 L2.87 9.03 L9.07 7.96Z" fill="#fdbc2f" stroke="#f3b42a" stroke-width="1.2" stroke-linejoin="round"/></svg>
<svg class="abs" style="left:362.6px;top:674.8px" width="24" height="24" viewBox="0 0 24 24"><path d="M12.00 2.40 L14.93 7.96 L21.13 9.03 L16.75 13.54 L17.64 19.77 L12.00 16.99 L6.36 19.77 L7.25 13.54 L2.87 9.03 L9.07 7.96Z" fill="#fdbc2f" stroke="#f3b42a" stroke-width="1.2" stroke-linejoin="round"/></svg>
<svg class="abs" style="left:388.4px;top:674.8px" width="24" height="24" viewBox="0 0 24 24"><path d="M12.00 2.40 L14.93 7.96 L21.13 9.03 L16.75 13.54 L17.64 19.77 L12.00 16.99 L6.36 19.77 L7.25 13.54 L2.87 9.03 L9.07 7.96Z" fill="#fdbc2f" stroke="#f3b42a" stroke-width="1.2" stroke-linejoin="round"/></svg>
<svg class="abs" style="left:414.2px;top:674.8px" width="24" height="24" viewBox="0 0 24 24"><path d="M12.00 2.40 L14.93 7.96 L21.13 9.03 L16.75 13.54 L17.64 19.77 L12.00 16.99 L6.36 19.77 L7.25 13.54 L2.87 9.03 L9.07 7.96Z" fill="#cfcfd3" stroke="#bdbdc2" stroke-width="1.2" stroke-linejoin="round"/></svg>
<div class="badge" style="left:476.4px;top:670px;width:29px;background:#ffd9cf">A</div>
<div class="badge" style="left:682.4px;top:670px;width:22.6px;background:#e0d4fc">I</div>
<div class="badge" style="left:902.4px;top:670px;width:28.2px;background:#ffcc9e">R</div>
<div class="badge" style="left:1145.4px;top:670px;width:28.2px;background:#ffcc9e">R</div>
</body></html>
